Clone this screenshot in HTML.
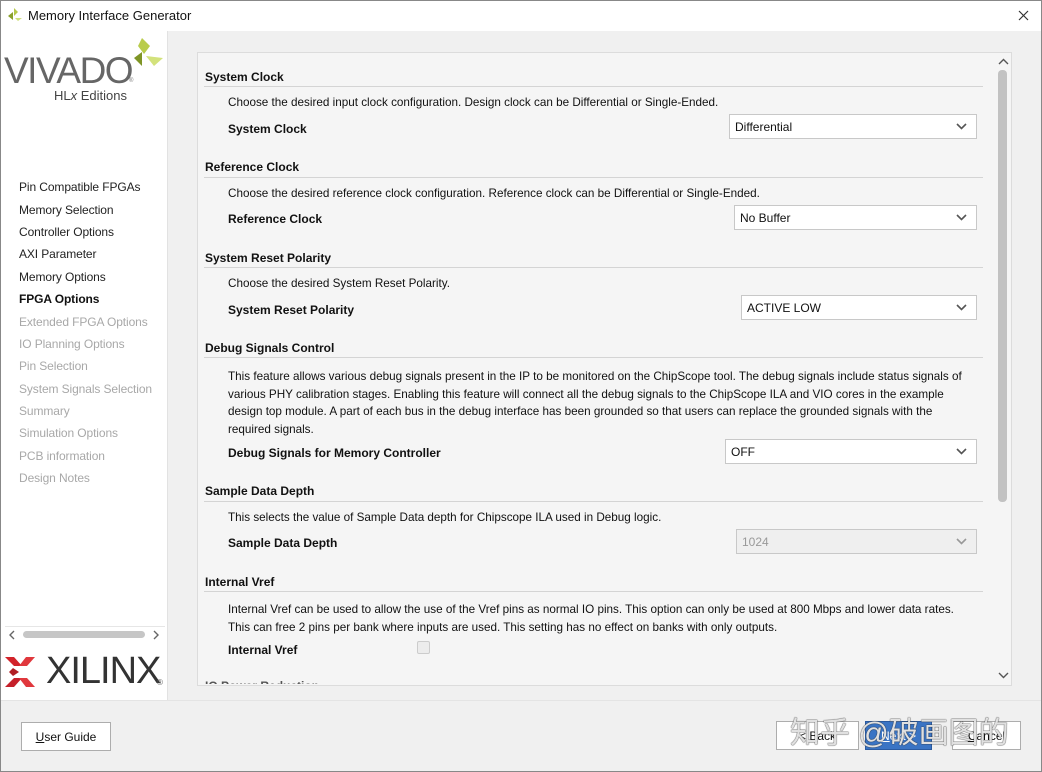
<!DOCTYPE html>
<html><head><meta charset="utf-8"><style>
*{margin:0;padding:0;box-sizing:border-box}
body{width:1042px;height:772px;overflow:hidden;background:#f0f0f0;font-family:"Liberation Sans",Arial,sans-serif;font-size:12px;color:#111;position:relative}
.a{position:absolute;white-space:nowrap}
.t{font-size:11.7px}
.b{font-weight:bold}
.sel{position:absolute;height:25px;background:#fff;border:1px solid #c8c8c8;padding:5px 0 0 5px;font-size:12px}
.sel svg{position:absolute;right:9px;top:8px}
.hl{position:absolute;left:204px;width:779px;height:1px;background:#d4d4d4}
.nav{position:absolute;left:19px;font-size:12px;color:#222;letter-spacing:-0.1px}
.nav.g{color:#a8a8a8}
.btn{position:absolute;height:29px;border:1px solid #adadad;background:#fff;text-align:center;padding-top:7px;font-size:12px}
</style></head><body>
<div class="a" style="left:0;top:0;width:1042px;height:772px;border:1px solid #888"></div>
<div class="a" style="left:1px;top:1px;width:1040px;height:30px;background:#fff"></div>
<svg class="a" style="left:7px;top:7px" width="16" height="16" viewBox="0 0 16 16"><polygon points="7,1 11,5 7,9" fill="#b5c84a"/><polygon points="1,9 6,5 6,13" fill="#8aa02a"/><polygon points="8,11 15,11 11,14" fill="#cfe07a"/></svg>
<div class="a" style="left:28px;top:8px;font-size:13px;color:#111">Memory Interface Generator</div>
<svg class="a" style="left:1018px;top:10px" width="11" height="11" viewBox="0 0 11 11"><path d="M1 1l9 9M10 1l-9 9" stroke="#333" stroke-width="1.2"/></svg>
<div class="a" style="left:1px;top:31px;width:167px;height:669px;background:#fff;border-right:1px solid #e2e2e2"></div>
<div class="a" style="left:4px;top:50px;font-size:37px;letter-spacing:-1.5px;color:#666">VIVADO</div>
<div class="a" style="left:129px;top:78px;font-size:6px;color:#777">®</div>
<svg class="a" style="left:130px;top:36px" width="36" height="34" viewBox="0 0 36 34"><polygon points="12,2 20,10 14,18 8,10" fill="#b9cc4c"/><polygon points="4,22 12,16 12,30" fill="#7f9526"/><polygon points="16,20 33,22 24,30" fill="#d3e27c"/></svg>
<div class="a" style="left:54px;top:88px;font-size:13px;color:#444">HL<i>x</i> Editions</div>
<div class="nav" style="top:180px">Pin Compatible FPGAs</div>
<div class="nav" style="top:203px">Memory Selection</div>
<div class="nav" style="top:225px">Controller Options</div>
<div class="nav" style="top:247px">AXI Parameter</div>
<div class="nav" style="top:270px">Memory Options</div>
<div class="nav b" style="top:292px;color:#111">FPGA Options</div>
<div class="nav g" style="top:315px">Extended FPGA Options</div>
<div class="nav g" style="top:337px">IO Planning Options</div>
<div class="nav g" style="top:359px">Pin Selection</div>
<div class="nav g" style="top:382px">System Signals Selection</div>
<div class="nav g" style="top:404px">Summary</div>
<div class="nav g" style="top:426px">Simulation Options</div>
<div class="nav g" style="top:449px">PCB information</div>
<div class="nav g" style="top:471px">Design Notes</div>
<div class="a" style="left:5px;top:626px;width:160px;height:1px;background:#e6e6e6"></div>
<svg class="a" style="left:9px;top:630px" width="6" height="10" viewBox="0 0 6 10"><path d="M5 1L1 5l4 4" stroke="#666" stroke-width="1.4" fill="none"/></svg>
<div class="a" style="left:23px;top:631px;width:122px;height:7px;border-radius:4px;background:#c6c6c6"></div>
<svg class="a" style="left:153px;top:630px" width="6" height="10" viewBox="0 0 6 10"><path d="M1 1l4 4-4 4" stroke="#666" stroke-width="1.4" fill="none"/></svg>
<svg class="a" style="left:5px;top:657px" width="30" height="30" viewBox="0 0 30 30"><polygon points="0,0 9,0 17,9 9,9" fill="#d2232a"/><polygon points="8,11 14,15 8,19 4,15" fill="#b01e24"/><polygon points="0,30 9,30 17,21 9,21" fill="#c5202a"/><polygon points="21,0 30,0 22,9 14,9" fill="#e0383d"/><polygon points="21,30 30,30 22,21 14,21" fill="#e0383d"/></svg>
<div class="a" style="left:46px;top:650px;font-size:38px;color:#333;letter-spacing:-1px">XILINX</div>
<div class="a" style="left:157px;top:678px;font-size:8px;color:#555">®</div>
<div class="a" style="left:197px;top:52px;width:815px;height:634px;background:#f5f5f5;border:1px solid #dcdcdc"></div>
<div class="a b" style="left:205px;top:70px">System Clock</div>
<div class="hl" style="top:86px"></div>
<div class="a t" style="left:228px;top:96px">Choose the desired input clock configuration. Design clock can be Differential or Single-Ended.</div>
<div class="a b" style="left:228px;top:122px">System Clock</div>
<div class="sel" style="left:729px;top:114px;width:248px">Differential<svg width="11" height="7" viewBox="0 0 11 7"><path d="M1 1l4.5 4.5L10 1" stroke="#555" stroke-width="1.6" fill="none"/></svg></div>
<div class="a b" style="left:205px;top:160px">Reference Clock</div>
<div class="hl" style="top:177px"></div>
<div class="a t" style="left:228px;top:187px">Choose the desired reference clock configuration. Reference clock can be Differential or Single-Ended.</div>
<div class="a b" style="left:228px;top:212px">Reference Clock</div>
<div class="sel" style="left:734px;top:205px;width:243px">No Buffer<svg width="11" height="7" viewBox="0 0 11 7"><path d="M1 1l4.5 4.5L10 1" stroke="#555" stroke-width="1.6" fill="none"/></svg></div>
<div class="a b" style="left:205px;top:251px">System Reset Polarity</div>
<div class="hl" style="top:267px"></div>
<div class="a t" style="left:228px;top:277px">Choose the desired System Reset Polarity.</div>
<div class="a b" style="left:228px;top:303px">System Reset Polarity</div>
<div class="sel" style="left:741px;top:295px;width:236px">ACTIVE LOW<svg width="11" height="7" viewBox="0 0 11 7"><path d="M1 1l4.5 4.5L10 1" stroke="#555" stroke-width="1.6" fill="none"/></svg></div>
<div class="a b" style="left:205px;top:341px">Debug Signals Control</div>
<div class="hl" style="top:357px"></div>
<div class="a t" style="left:228px;top:368px;line-height:17.7px">This feature allows various debug signals present in the IP to be monitored on the ChipScope tool. The debug signals include status signals of<br>various PHY calibration stages. Enabling this feature will connect all the debug signals to the ChipScope ILA and VIO cores in the example<br>design top module. A part of each bus in the debug interface has been grounded so that users can replace the grounded signals with the<br>required signals.</div>
<div class="a b" style="left:228px;top:446px">Debug Signals for Memory Controller</div>
<div class="sel" style="left:725px;top:439px;width:252px">OFF<svg width="11" height="7" viewBox="0 0 11 7"><path d="M1 1l4.5 4.5L10 1" stroke="#555" stroke-width="1.6" fill="none"/></svg></div>
<div class="a b" style="left:205px;top:484px">Sample Data Depth</div>
<div class="hl" style="top:501px"></div>
<div class="a t" style="left:228px;top:511px">This selects the value of Sample Data depth for Chipscope ILA used in Debug logic.</div>
<div class="a b" style="left:228px;top:536px">Sample Data Depth</div>
<div class="sel" style="left:736px;top:529px;width:241px;background:#efefef;color:#999">1024<svg width="11" height="7" viewBox="0 0 11 7"><path d="M1 1l4.5 4.5L10 1" stroke="#999" stroke-width="1.6" fill="none"/></svg></div>
<div class="a b" style="left:205px;top:575px">Internal Vref</div>
<div class="hl" style="top:591px"></div>
<div class="a t" style="left:228px;top:601px;line-height:17.7px">Internal Vref can be used to allow the use of the Vref pins as normal IO pins. This option can only be used at 800 Mbps and lower data rates.<br>This can free 2 pins per bank where inputs are used. This setting has no effect on banks with only outputs.</div>
<div class="a b" style="left:228px;top:643px">Internal Vref</div>
<div class="a" style="left:417px;top:641px;width:13px;height:13px;border:1px solid #ccc;border-radius:2px;background:#ececec"></div>
<div class="a b" style="left:205px;top:679px;height:5px;overflow:hidden;color:#555">IO Power Reduction</div>
<svg class="a" style="left:998px;top:58px" width="11" height="7" viewBox="0 0 11 7"><path d="M1 6l4.5-4.5L10 6" stroke="#555" stroke-width="1.4" fill="none"/></svg>
<div class="a" style="left:998px;top:70px;width:9px;height:432px;border-radius:4px;background:#c2c2c2"></div>
<svg class="a" style="left:998px;top:672px" width="11" height="7" viewBox="0 0 11 7"><path d="M1 1l4.5 4.5L10 1" stroke="#555" stroke-width="1.4" fill="none"/></svg>
<div class="a" style="left:1px;top:700px;width:1040px;height:1px;background:#e4e4e4"></div>
<div class="btn" style="left:21px;top:722px;width:90px"><u>U</u>ser Guide</div>
<div class="btn" style="left:776px;top:721px;width:83px">&lt; <u>B</u>ack</div>
<div class="btn" style="left:865px;top:721px;width:67px;background:#3a74c4;border-color:#2a5aa0;color:#fff"><u>N</u>ext &gt;</div>
<div class="btn" style="left:952px;top:721px;width:69px"><u>C</u>ancel</div>
<div class="a" style="left:790px;top:708px;font-size:30px;color:rgba(255,255,255,0.85);font-family:'Liberation Sans','Noto Sans CJK SC',sans-serif;text-shadow:0 0 1px #333,0 0 1px #333">知乎 @破画图的</div>
</body></html>
